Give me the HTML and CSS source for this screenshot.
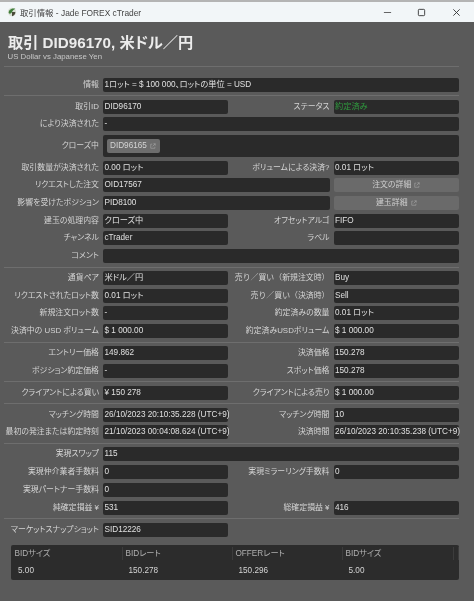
FILE: index.html
```html
<!DOCTYPE html>
<html lang="ja">
<head>
<meta charset="utf-8">
<title>取引情報</title>
<link rel="stylesheet" href="styles.css">
</head>
<body>
<div class="window">
  <header class="titlebar">
    <svg class="logo" viewBox="0 0 12 12"><circle cx="6" cy="6" r="5" fill="#d8e0d4"/><path d="M2 7C2 3 6 1 10 2 8 3 7 4 6 6 5 8 3 9 2 7Z" fill="#3f7d3a"/><path d="M6 6 10 6C10 9 8 11 6 11Z" fill="#4a4a3a"/></svg>
    <span class="wintitle">取引情報 - Jade FOREX cTrader</span>
    <div class="controls">
      <svg viewBox="0 0 10 10"><path d="M1 5H9" stroke="#555" stroke-width="1"/></svg>
      <svg viewBox="0 0 10 10"><rect x="1.5" y="1.5" width="7" height="7" rx="1" fill="none" stroke="#333" stroke-width="1"/></svg>
      <svg viewBox="0 0 10 10"><path d="M1.5 1.5 8.5 8.5M8.5 1.5 1.5 8.5" stroke="#333" stroke-width="1"/></svg>
    </div>
  </header>
  <main class="content">
    <h1>取引 DID96170, 米ドル／円</h1>
    <p class="sub">US Dollar vs Japanese Yen</p>

    <section class="sec first">
      <label>情報</label><div class="f span3">1ロット = $ 100 000、ロットの単位 = USD</div>
    </section>

    <section class="sec trade">
      <label>取引ID</label><div class="f">DID96170</div><label>ステータス</label><div class="f green">約定済み</div>
      <label>により決済された</label><div class="f span3">-</div>
      <label>クローズ中</label><div class="f span3 tall"><a class="chip">DID96165 <svg class="ext" viewBox="0 0 8 8"><path d="M3 1.5H1V7H6.5V5M4.5 1H7V3.5M7 1 3.5 4.5" fill="none" stroke="currentColor" stroke-width=".8"/></svg></a></div>
      <label>取引数量が決済された</label><div class="f">0.00 ロット</div><label>ボリュームによる決済?</label><div class="f">0.01 ロット</div>
      <label>リクエストした注文</label><div class="f span2">OID17567</div><a class="btn">注文の詳細 <svg class="ext" viewBox="0 0 8 8"><path d="M3 1.5H1V7H6.5V5M4.5 1H7V3.5M7 1 3.5 4.5" fill="none" stroke="currentColor" stroke-width=".8"/></svg></a>
      <label>影響を受けたポジション</label><div class="f span2">PID8100</div><a class="btn">建玉詳細 <svg class="ext" viewBox="0 0 8 8"><path d="M3 1.5H1V7H6.5V5M4.5 1H7V3.5M7 1 3.5 4.5" fill="none" stroke="currentColor" stroke-width=".8"/></svg></a>
      <label>建玉の処理内容</label><div class="f">クローズ中</div><label>オフセットアルゴ</label><div class="f">FIFO</div>
      <label>チャンネル</label><div class="f">cTrader</div><label>ラベル</label><div class="f"></div>
      <label>コメント</label><div class="f span3"></div>
    </section>

    <section class="sec">
      <label>通貨ペア</label><div class="f">米ドル／円</div><label class="fullwidth">売り／買い（新規注文時）</label><div class="f">Buy</div>
      <label>リクエストされたロット数</label><div class="f">0.01 ロット</div><label class="fullwidth">売り／買い（決済時）</label><div class="f">Sell</div>
      <label>新規注文ロット数</label><div class="f">-</div><label>約定済みの数量</label><div class="f">0.01 ロット</div>
      <label>決済中の USD ボリューム</label><div class="f">$ 1 000.00</div><label>約定済みUSDボリューム</label><div class="f">$ 1 000.00</div>
    </section>

    <section class="sec">
      <label>エントリー価格</label><div class="f">149.862</div><label>決済価格</label><div class="f">150.278</div>
      <label>ポジション約定価格</label><div class="f">-</div><label>スポット価格</label><div class="f">150.278</div>
    </section>

    <section class="sec">
      <label>クライアントによる買い</label><div class="f">¥ 150 278</div><label>クライアントによる売り</label><div class="f">$ 1 000.00</div>
    </section>

    <section class="sec">
      <label>マッチング時間</label><div class="f">26/10/2023 20:10:35.228 (UTC+9)</div><label>マッチング時間</label><div class="f">10</div>
      <label>最初の発注または約定時刻</label><div class="f">21/10/2023 00:04:08.624 (UTC+9)</div><label>決済時間</label><div class="f">26/10/2023 20:10:35.238 (UTC+9)</div>
    </section>

    <section class="sec">
      <label>実現スワップ</label><div class="f span3">115</div>
      <label>実現仲介業者手数料</label><div class="f">0</div><label>実現ミラーリング手数料</label><div class="f">0</div>
      <label>実現パートナー手数料</label><div class="f">0</div><span class="blank"></span><span class="blank"></span>
      <label>純確定損益 ¥</label><div class="f">531</div><label>総確定損益 ¥</label><div class="f">416</div>
    </section>

    <section class="sec">
      <label>マーケットスナップショット</label><div class="f">SID12226</div>
    </section>

    <div class="table">
      <div class="th">BIDサイズ</div><div class="th">BIDレート</div><div class="th">OFFERレート</div><div class="th">BIDサイズ</div><div class="th"></div>
      <div class="td">5.00</div><div class="td">150.278</div><div class="td">150.296</div><div class="td">5.00</div><div class="td"></div>
    </div>
  </main>
</div>
</body>
</html>
```
FILE: styles.css
```css
* { box-sizing: border-box; }
html, body { margin: 0; height: 100%; background: #5a5a5a; }
body { font-family: "Liberation Sans", "Noto Sans CJK JP", sans-serif; font-feature-settings: "palt"; overflow: hidden; }
.window { width: 474px; height: 601px; display: flex; flex-direction: column; background: #5a5a5a; border-top: 2.5px solid #b4b4b4; overflow: hidden; filter: blur(0.35px); }
.titlebar { height: 20px; flex: none; background: #f2f6f8; display: flex; align-items: center; padding-left: 7px; color: #444; }
.logo { width: 10px; height: 10px; margin-right: 3px; }
.wintitle { font-size: 8.4px; }
.controls { margin-left: auto; display: flex; align-items: center; gap: 25.5px; padding-right: 13.5px; }
.controls svg { width: 9px; height: 9px; }
.content { padding: 0 15px 0 4px; }
h1 { margin: 11.5px 0 0 4px; font-size: 15.2px; line-height: 18px; font-weight: 700; color: #ececec; white-space: nowrap; }
.sub { margin: 0 0 0 3.5px; font-size: 7.8px; line-height: 10px; color: #c8c8c8; }
.sec { display: grid; grid-template-columns: 95px 125px 97.5px 125.5px; column-gap: 4px; row-gap: 3.7px; grid-auto-rows: 14px; padding: 3.5px 0; border-top: 1px solid #6e6e6e; }
.sec.first { margin-top: 4px; padding: 11px 0 3.5px; }
.sec.trade { grid-template-rows: 14px 14px 22px; }
label { display: flex; justify-content: flex-end; align-items: center; font-size: 7.9px; line-height: 14px; color: #d4d4d4; white-space: nowrap; }
label.fullwidth { font-feature-settings: normal; }
.f { background: #2a2a2a; border-radius: 2px; font-size: 8.2px; line-height: 14px; color: #e0e0e0; padding-left: 1.5px; white-space: nowrap; }
.span3 { grid-column: span 3; }
.span2 { grid-column: span 2; }
.green { color: #2f9a3e; }
.tall { display: flex; align-items: center; padding-left: 4px; }
.chip { background: #6d6d6d; color: #d4d4d4; border-radius: 2px; height: 14px; padding: 0 4px 0 3px; font-size: 8.2px; line-height: 14px; display: inline-flex; align-items: center; gap: 3px; }
.btn { background: #6a6a6a; border-radius: 2px; color: #cfcfcf; font-size: 7.9px; line-height: 14px; display: flex; align-items: center; justify-content: center; gap: 3px; }
.ext { width: 6px; height: 6px; color: #a8a8a8; }
.table { margin: 5px 0 0 7px; width: 448px; height: 35px; background: #2c2c2c; border-radius: 2px; display: grid; grid-template-columns: 111.5px 110px 110px 111px 5.5px; grid-template-rows: 17px 18px; }
.th { font-size: 8.2px; line-height: 13px; color: #b0b0b0; padding-left: 3px; margin: 2px 0; border-right: 1px solid #3c3c3c; }
.td { font-size: 8.2px; line-height: 18px; color: #d4d4d4; padding-left: 6px; }
.th:first-child { padding-left: 3.5px; }
.td:nth-child(6) { padding-left: 7px; }
```
